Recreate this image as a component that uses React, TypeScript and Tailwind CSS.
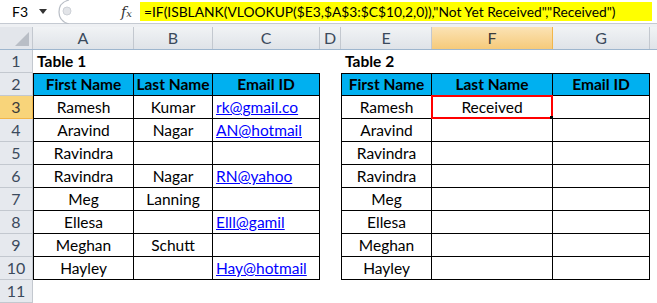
import React from 'react';

const cols = [
  { key: 'A', w: 'w-[101px]' },
  { key: 'B', w: 'w-[79px]' },
  { key: 'C', w: 'w-[107px]' },
  { key: 'D', w: 'w-[21px]' },
  { key: 'E', w: 'w-[91px]' },
  { key: 'F', w: 'w-[121px]' },
  { key: 'G', w: 'w-[97px]' },
];

const table1 = [
  ['Ramesh', 'Kumar', 'rk@gmail.co'],
  ['Aravind', 'Nagar', 'AN@hotmail'],
  ['Ravindra', '', ''],
  ['Ravindra', 'Nagar', 'RN@yahoo'],
  ['Meg', 'Lanning', ''],
  ['Ellesa', '', 'Elll@gamil'],
  ['Meghan', 'Schutt', ''],
  ['Hayley', '', 'Hay@hotmail'],
];

const headers = ['First Name', 'Last Name', 'Email ID'];

const FormulaBar: React.FC = () => (
  <div className="flex h-[24px] items-stretch border-b border-[#c5cad2] bg-white">
    <div className="flex w-[55px] items-center justify-between pl-[12px] pr-[8px] text-[14px] text-black">
      <span>F3</span>
      <svg width="8" height="5" viewBox="0 0 8 5"><path d="M0 0h8L4 5z" fill="#333" /></svg>
    </div>
    <div className="relative w-[85px]">
      <svg className="absolute left-0 top-0" width="20" height="24" viewBox="0 0 20 24">
        <path d="M14 0 C 6 2, 4 8, 4 12 C 4 16, 6 22, 14 24" fill="none" stroke="#b9bec6" strokeWidth="1.2" />
        <circle cx="12" cy="11" r="4" fill="#e2e4e8" stroke="#cdd1d7" />
      </svg>
      <span className="absolute left-[66px] top-[2px] font-['DejaVu_Serif',serif] text-[14px] italic text-[#333]">
        f<span className="text-[10px]">x</span>
      </span>
    </div>
    <div className="my-[2px] mr-[5px] flex flex-1 items-center bg-[#ffff00] pl-[4px] text-[13.8px] leading-none text-black">
      =IF(ISBLANK(VLOOKUP($E3,$A$3:$C$10,2,0)),"Not Yet Received","Received")
    </div>
  </div>
);

const ColumnHeaders: React.FC = () => (
  <div className="flex h-[23px] border-b border-[#9eb6ce]">
    <div className="relative w-[33px] border-r border-[#c3c8cf] bg-[#e3e6eb]">
      <svg className="absolute bottom-[3px] right-[3px]" width="14" height="14" viewBox="0 0 14 14">
        <path d="M14 0V14H0z" fill="#b9bec6" />
      </svg>
    </div>
    {cols.map((c) => (
      <div
        key={c.key}
        className={`${c.w} flex items-center justify-center border-r text-[16px] ${
          c.key === 'F'
            ? 'border-[#f2b64a] bg-gradient-to-b from-[#fbe3b4] to-[#f6ca7a] text-[#3b3b3b]'
            : 'border-[#c3c8cf] bg-gradient-to-b from-[#f1f3f5] to-[#dfe3e8] text-[#3b4a5c]'
        }`}
      >
        {c.key}
      </div>
    ))}
    <div className="flex-1 bg-gradient-to-b from-[#f1f3f5] to-[#dfe3e8]" />
  </div>
);

const RowNum: React.FC<{ n: number }> = ({ n }) => (
  <div
    className={`flex w-[33px] items-center justify-center border-b border-r text-[16px] ${
      n === 3 ? 'border-[#f2b64a] bg-[#f8d47a] text-[#3b3b3b]' : 'border-[#c3c8cf] bg-[#e6e9ee] text-[#3b4a5c]'
    }`}
  >
    {n}
  </div>
);

const Cell: React.FC<{
  w: string;
  box?: boolean;
  first?: boolean;
  top?: boolean;
  head?: boolean;
  link?: boolean;
  children?: React.ReactNode;
  selected?: boolean;
}> = ({ w, box, first, top, head, link, children, selected }) => (
  <div
    className={`relative ${w} flex items-center pt-[1px] ${link ? 'justify-start pl-[3px]' : 'justify-center'} ${
      box ? `border-r border-b border-black ${first ? 'border-l' : ''} ${top ? 'border-t' : ''}` : ''
    } ${head ? 'bg-[#00b0f0] font-bold' : 'bg-white'}`}
  >
    {link ? <span className="text-[#0000ff] underline underline-offset-1">{children}</span> : children}
    {selected && (
      <div className="absolute -left-[1px] -top-[1px] -right-[1px] -bottom-[1px] border-[2.5px] border-[#ff0000]">
        <div className="absolute -bottom-[4px] -right-[4px] h-[5px] w-[5px] bg-black" />
      </div>
    )}
  </div>
);

const App: React.FC = () => {
  const rows = [];
  // row 1: titles
  rows.push(
    <div key={1} className="flex h-[23px]">
      <RowNum n={1} />
      <div className="flex w-[101px] items-center pl-[4px] pt-[1px] font-bold">Table 1</div>
      <div className="w-[79px]" />
      <div className="w-[107px]" />
      <div className="w-[21px]" />
      <div className="flex w-[91px] items-center pl-[4px] pt-[1px] font-bold">Table 2</div>
      <div className="w-[121px]" />
      <div className="w-[97px]" />
      <div className="flex-1" />
    </div>
  );
  // row 2: headers
  rows.push(
    <div key={2} className="flex h-[23px]">
      <RowNum n={2} />
      {headers.map((h, i) => (
        <Cell key={'a' + i} w={cols[i].w} box head first={i === 0} top>
          {h}
        </Cell>
      ))}
      <div className="w-[21px]" />
      {headers.map((h, i) => (
        <Cell key={'b' + i} w={cols[i + 4].w} box head first={i === 0} top>
          {h}
        </Cell>
      ))}
      <div className="flex-1" />
    </div>
  );
  table1.forEach((r, ri) => {
    const n = ri + 3;
    rows.push(
      <div key={n} className="flex h-[23px]">
        <RowNum n={n} />
        <Cell w={cols[0].w} box first>{r[0]}</Cell>
        <Cell w={cols[1].w} box>{r[1]}</Cell>
        <Cell w={cols[2].w} box link={!!r[2]}>{r[2]}</Cell>
        <div className="w-[21px]" />
        <Cell w={cols[4].w} box first>{r[0]}</Cell>
        <Cell w={cols[5].w} box selected={ri === 0}>{ri === 0 ? 'Received' : ''}</Cell>
        <Cell w={cols[6].w} box />
        <div className="flex-1" />
      </div>
    );
  });
  rows.push(
    <div key={11} className="flex h-[23px]">
      <RowNum n={11} />
      <div className="flex-1" />
    </div>
  );

  return (
    <div className="h-[303px] w-[657px] overflow-hidden bg-white font-['Lato',sans-serif] text-[15.5px] text-black">
      <FormulaBar />
      <div className="h-[3px] bg-[#eef0f3]" />
      <ColumnHeaders />
      {rows}
    </div>
  );
};

export default App;
